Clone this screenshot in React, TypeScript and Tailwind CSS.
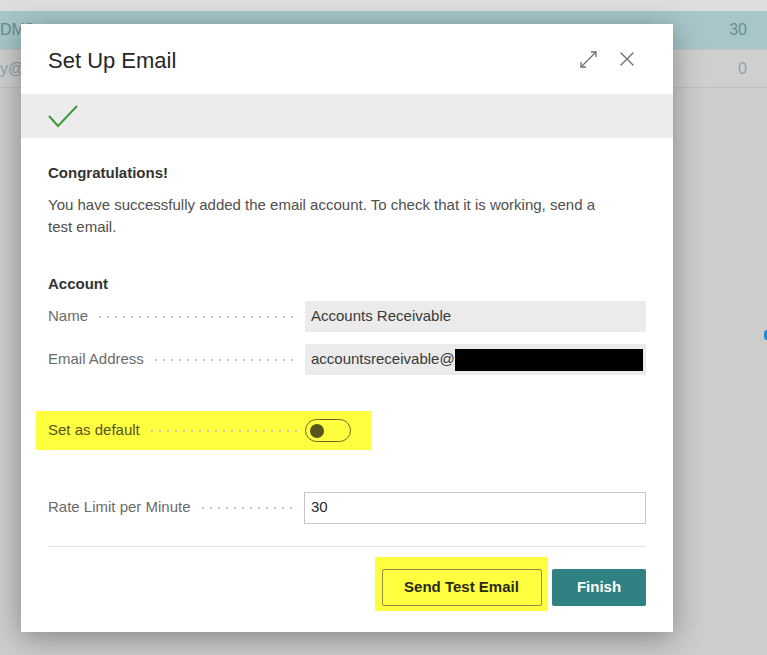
import { X } from 'lucide-react'

const font = { fontFamily: '"Liberation Sans", Arial, sans-serif' }

function Leader() {
  return (
    <div className="mx-2 h-[4px] flex-1 bg-[radial-gradient(circle,#c4c4c4_0.9px,transparent_1.1px)] bg-[length:8px_4px] bg-repeat-x" />
  )
}

function FieldRow({ label, children }: { label: string; children: React.ReactNode }) {
  return (
    <div className="flex h-[31px] items-center">
      <div className="flex w-[257px] items-center">
        <span className="text-[15px] text-[#6b6b6b]">{label}</span>
        <Leader />
      </div>
      <div className="flex-1">{children}</div>
    </div>
  )
}

export default function App() {
  return (
    <div className="relative h-[655px] w-[767px] overflow-hidden bg-[#cdcdcd]" style={font}>
      {/* dimmed list behind the dialog */}
      <div className="h-[11px] bg-[#dedede]" />
      <div className="flex h-[39px] items-center justify-between border-b border-[#c3c3c3] bg-[#a8c6c9] pr-[20px] text-[16px] text-[#6a8d90]">
        <span>DM3</span>
        <span>30</span>
      </div>
      <div className="flex h-[38px] items-center justify-between border-b border-[#c0c0c0] bg-[#cfcfcf] pr-[20px] text-[16px] text-[#8aa7aa]">
        <span>y@c</span>
        <span>0</span>
      </div>
      <div className="absolute right-[-4px] top-[330px] h-[10px] w-[7px] rounded-full bg-[#1e88d6]" />

      {/* dialog */}
      <div className="absolute left-[21px] top-[24px] flex h-[608px] w-[652px] flex-col bg-white shadow-[0_6px_28px_rgba(0,0,0,0.35)]">
        <div className="flex h-[70px] items-center justify-between pl-[27px] pr-[34px]">
          <h1 className="pt-[2px] text-[22px] text-[#262626]">Set Up Email</h1>
          <div className="flex items-center gap-[17px] text-[#6e6e6e]">
            <svg width="19" height="19" viewBox="0 0 19 19" fill="none" stroke="currentColor" strokeWidth="1.3">
              <path d="M2 17L17 2" />
              <path d="M12 2h5v5" />
              <path d="M2 12v5h5" />
            </svg>
            <X size={24} strokeWidth={1.4} />
          </div>
        </div>

        <div className="flex h-[44px] items-center bg-[#ececec] pl-[27px]">
          <svg width="30" height="24" viewBox="0 0 30 24" fill="none" stroke="#3f9a3f" strokeWidth="2">
            <path d="M1 12l9 10L29 2" />
          </svg>
        </div>

        <div className="flex flex-1 flex-col px-[27px]">
          <p className="mt-[24px] text-[15px] font-semibold text-[#333]">Congratulations!</p>
          <p className="mt-[9px] w-[560px] text-[15px] leading-[22px] text-[#4f4f4f]">
            You have successfully added the email account. To check that it is working, send a test email.
          </p>

          <p className="mt-[35px] text-[15px] font-semibold text-[#333]">Account</p>
          <div className="mt-[6px] flex flex-col gap-[12px]">
            <FieldRow label="Name">
              <div className="flex h-[31px] items-center bg-[#ebebeb] px-[6px] text-[15px] text-[#3a3a3a]">
                Accounts Receivable
              </div>
            </FieldRow>
            <FieldRow label="Email Address">
              <div className="flex h-[31px] items-center bg-[#ebebeb] pl-[6px] pr-[3px] text-[15px] text-[#3a3a3a]">
                <span>accountsreceivable@</span>
                <span className="h-[22px] flex-1 bg-black" />
              </div>
            </FieldRow>
          </div>

          <div className="-ml-[12px] mt-[36px] flex h-[39px] w-[335px] items-center bg-[#ffff40] pl-[12px]">
            <div className="flex w-[257px] items-center">
              <span className="text-[15px] text-[#55551f]">Set as default</span>
              <Leader />
            </div>
            <div className="flex h-[23px] w-[46px] items-center rounded-full border-[1.5px] border-[#6a6a1e] pl-[4px]">
              <div className="h-[14px] w-[14px] rounded-full bg-[#55551c]" />
            </div>
          </div>

          <div className="mt-[42px]">
            <FieldRow label="Rate Limit per Minute">
              <div className="-ml-[1px] flex h-[32px] items-center border border-[#c6c6c6] px-[6px] text-[15px] text-[#2a2a2a]">
                30
              </div>
            </FieldRow>
          </div>

          <div className="mt-[23px] h-px bg-[#e1e1e1]" />

          <div className="mt-[10px] flex justify-end gap-[4px]">
            <div className="flex h-[54px] w-[173px] items-start justify-center bg-[#ffff40] pt-[12px]">
              <button className="h-[37px] w-[160px] rounded-[2px] border border-[#8e8e46] text-[15px] font-semibold text-[#2a2a10]">
                Send Test Email
              </button>
            </div>
            <div className="flex h-[54px] items-start pt-[12px]">
              <button className="h-[37px] w-[94px] rounded-[2px] bg-[#2f8281] text-[15px] font-semibold text-white">
                Finish
              </button>
            </div>
          </div>
        </div>
      </div>
    </div>
  )
}
